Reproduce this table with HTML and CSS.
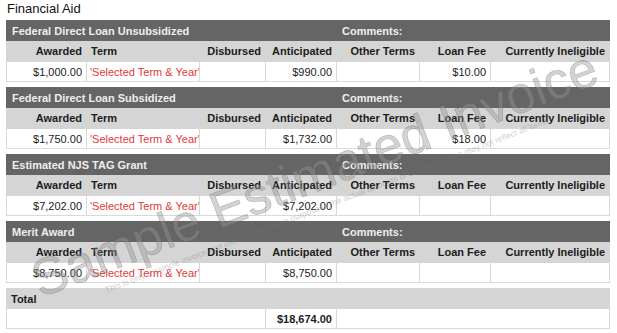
FILE: index.html
```html
<!DOCTYPE html>
<html>
<head>
<meta charset="utf-8">
<link rel="stylesheet" href="styles.css">
</head>
<body>
<div class="page">
  <h1 class="title">Financial Aid</h1>

  <table class="aid">
    <colgroup><col class="c1"><col class="c2"><col class="c3"><col class="c4"><col class="c5"><col class="c6"><col class="c7"></colgroup>
    <tr class="hd"><td colspan="4">Federal Direct Loan Unsubsidized</td><td colspan="3">Comments:</td></tr>
    <tr class="cols"><td>Awarded</td><td class="l">Term</td><td>Disbursed</td><td>Anticipated</td><td>Other Terms</td><td>Loan Fee</td><td>Currently Ineligible</td></tr>
    <tr class="data"><td>$1,000.00</td><td class="term">'Selected Term &amp; Year'</td><td></td><td>$990.00</td><td></td><td>$10.00</td><td></td></tr>
  </table>

  <table class="aid">
    <colgroup><col class="c1"><col class="c2"><col class="c3"><col class="c4"><col class="c5"><col class="c6"><col class="c7"></colgroup>
    <tr class="hd"><td colspan="4">Federal Direct Loan Subsidized</td><td colspan="3">Comments:</td></tr>
    <tr class="cols"><td>Awarded</td><td class="l">Term</td><td>Disbursed</td><td>Anticipated</td><td>Other Terms</td><td>Loan Fee</td><td>Currently Ineligible</td></tr>
    <tr class="data"><td>$1,750.00</td><td class="term">'Selected Term &amp; Year'</td><td></td><td>$1,732.00</td><td></td><td>$18.00</td><td></td></tr>
  </table>

  <table class="aid">
    <colgroup><col class="c1"><col class="c2"><col class="c3"><col class="c4"><col class="c5"><col class="c6"><col class="c7"></colgroup>
    <tr class="hd"><td colspan="4">Estimated NJS TAG Grant</td><td colspan="3">Comments:</td></tr>
    <tr class="cols"><td>Awarded</td><td class="l">Term</td><td>Disbursed</td><td>Anticipated</td><td>Other Terms</td><td>Loan Fee</td><td>Currently Ineligible</td></tr>
    <tr class="data"><td>$7,202.00</td><td class="term">'Selected Term &amp; Year'</td><td></td><td>$7,202.00</td><td></td><td></td><td></td></tr>
  </table>

  <table class="aid">
    <colgroup><col class="c1"><col class="c2"><col class="c3"><col class="c4"><col class="c5"><col class="c6"><col class="c7"></colgroup>
    <tr class="hd"><td colspan="4">Merit Award</td><td colspan="3">Comments:</td></tr>
    <tr class="cols"><td>Awarded</td><td class="l">Term</td><td>Disbursed</td><td>Anticipated</td><td>Other Terms</td><td>Loan Fee</td><td>Currently Ineligible</td></tr>
    <tr class="data"><td>$8,750.00</td><td class="term">'Selected Term &amp; Year'</td><td></td><td>$8,750.00</td><td></td><td></td><td></td></tr>
  </table>

  <table class="aid">
    <colgroup><col class="c1"><col class="c2"><col class="c3"><col class="c4"><col class="c5"><col class="c6"><col class="c7"></colgroup>
    <tr class="cols total-hd"><td colspan="7" class="l">Total</td></tr>
    <tr class="data total"><td colspan="3"></td><td>$18,674.00</td><td colspan="3"></td></tr>
  </table>

  <div class="watermark">
    <div class="wm-inner">
      <div class="wm-big">Sample Estimated Invoice</div>
      <div class="wm-small">This is only a sample invoice and used for reference purposes. The actual amounts of courses or fees may not reflect all items</div>
    </div>
  </div>
</div>
</body>
</html>
```

FILE: styles.css
```css
html, body {
  margin: 0;
  padding: 0;
  background: #ffffff;
}

.page {
  position: relative;
  width: 617px;
  height: 333px;
  overflow: hidden;
  padding: 0 8px 0 6px;
  box-sizing: border-box;
  font-family: "Liberation Sans", Arial, sans-serif;
  color: #1a1a1a;
}

.title {
  margin: 0 0 3px 1px;
  padding-top: 1px;
  font-size: 13px;
  line-height: 16px;
  font-weight: normal;
  color: #111;
}

.aid {
  width: 603px;
  table-layout: fixed;
  border-collapse: collapse;
  margin-bottom: 5px;
  font-size: 11px;
}

.c1 { width: 80px; }
.c2 { width: 113px; }
.c3 { width: 66px; }
.c4 { width: 71px; }
.c5 { width: 83px; }
.c6 { width: 71px; }
.c7 { width: 119px; }

.aid td {
  padding: 0 4px;
  text-align: right;
  white-space: nowrap;
  overflow: hidden;
  vertical-align: middle;
}

.aid td.l {
  text-align: left;
}

.hd {
  height: 20px;
}

.hd td {
  background: #656565;
  border: 1px solid #656565;
  color: #eeeeee;
  font-weight: bold;
  text-align: left;
  padding: 0 5px;
}

.cols {
  height: 21px;
}

.cols td {
  background: #d5d5d5;
  border: 1px solid #d5d5d5;
  color: #1c1c1c;
  font-weight: bold;
}

.data {
  height: 20px;
}

.data td {
  background: #ffffff;
  border: 1px solid #d9d9d9;
  color: #222;
}

.data td.term {
  text-align: left;
  color: #e0393b;
  padding-left: 3px;
}

.total-hd {
  height: 20px;
}

.total td {
  font-weight: bold;
}

.watermark {
  position: absolute;
  left: 0;
  top: 0;
  width: 617px;
  height: 333px;
  display: flex;
  align-items: center;
  justify-content: center;
  pointer-events: none;
}

.wm-inner {
  transform: translate(8px, 12px) rotate(-21deg);
  display: flex;
  flex-direction: column;
  align-items: center;
  white-space: nowrap;
}

.wm-big {
  font-size: 52px;
  line-height: 54px;
  color: rgba(150, 150, 150, 0.42);
  -webkit-text-stroke: 0.6px rgba(90, 90, 90, 0.35);
}

.wm-small {
  margin-top: 2px;
  font-size: 8.5px;
  line-height: 10px;
  color: rgba(120, 120, 120, 0.38);
}
```
